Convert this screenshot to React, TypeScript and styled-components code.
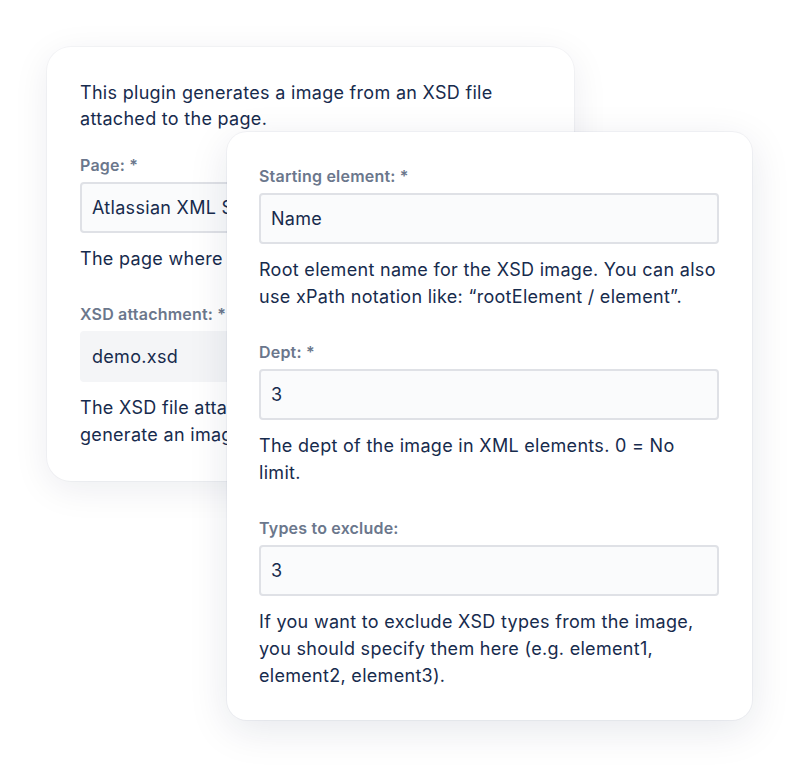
import type { ReactNode } from "react";
import styled, { createGlobalStyle } from "styled-components";

const GlobalStyle = createGlobalStyle`
  html, body {
    margin: 0;
    padding: 0;
    background: #ffffff;
  }
  body {
    font-family: Inter, "Noto Sans", "Liberation Sans", sans-serif;
    color: #172b4d;
    -webkit-font-smoothing: antialiased;
  }
`;

type FieldProps = {
  label: string;
  value: string;
  help: ReactNode;
  disabled?: boolean;
  first?: boolean;
};

const Field = ({ label, value, help, disabled, first }: FieldProps) => (
  <FieldGroup $first={first}>
    <Label>{label}</Label>
    <Input $disabled={disabled}>{value}</Input>
    <Help>{help}</Help>
  </FieldGroup>
);

export default function App() {
  return (
    <>
      <GlobalStyle />
      <Stage>
        <BackCard>
          <Intro>This plugin generates a image from an XSD file attached to the page.</Intro>
          <Spacer />
          <Field
            first
            label="Page: *"
            value="Atlassian XML Schema Documentation"
            help="The page where the XSD file is attached."
          />
          <Field
            label="XSD attachment: *"
            value="demo.xsd"
            disabled
            help={
              <>
                The XSD file attached to the page used to
                <br />
                generate an image.
              </>
            }
          />
        </BackCard>
        <FrontCard>
          <Field
            first
            label="Starting element: *"
            value="Name"
            help="Root element name for the XSD image. You can also use xPath notation like: “rootElement / element”."
          />
          <Field
            label="Dept: *"
            value="3"
            help="The dept of the image in XML elements. 0 = No limit."
          />
          <Field
            label="Types to exclude:"
            value="3"
            help="If you want to exclude XSD types from the image, you should specify them here (e.g. element1, element2, element3)."
          />
        </FrontCard>
      </Stage>
    </>
  );
}

const Stage = styled.div`
  position: relative;
  width: 800px;
  height: 768px;
  padding: 47px 0 0 47px;
  box-sizing: border-box;
  overflow: hidden;
`;

const Card = styled.div`
  background: #ffffff;
  box-sizing: border-box;
  display: flex;
  flex-direction: column;
`;

const BackCard = styled(Card)`
  width: 527px;
  height: 434px;
  border-radius: 24px;
  padding: 33px 33px 0 33px;
  overflow: hidden;
  box-shadow: 0 0 0 1px rgba(9, 30, 66, 0.03), 0 8px 36px rgba(9, 30, 66, 0.08);
`;

const FrontCard = styled(Card)`
  position: absolute;
  left: 227px;
  top: 132px;
  width: 525px;
  height: 588px;
  border-radius: 20px;
  padding: 34px 33px 0 32px;
  box-shadow: 0 0 0 1px rgba(9, 30, 66, 0.04), 0 10px 40px rgba(9, 30, 66, 0.1);
`;

const Intro = styled.p`
  margin: 0;
  font-size: 18px;
  line-height: 26px;
  letter-spacing: 0.3px;
  width: 440px;
`;

const Spacer = styled.div`
  height: 23px;
`;

const FieldGroup = styled.div<{ $first?: boolean }>`
  display: flex;
  flex-direction: column;
  margin-top: ${(p) => (p.$first ? "0" : "32px")};
`;

const Label = styled.div`
  font-size: 16px;
  line-height: 20px;
  font-weight: 600;
  letter-spacing: 0.2px;
  color: #6b778c;
  margin-bottom: 7px;
  white-space: nowrap;
`;

const Input = styled.div<{ $disabled?: boolean }>`
  height: 51px;
  box-sizing: border-box;
  border-radius: 4px;
  border: 2px solid ${(p) => (p.$disabled ? "#f4f5f7" : "#dfe1e6")};
  background: ${(p) => (p.$disabled ? "#f4f5f7" : "#fafbfc")};
  padding: 0 10px;
  display: flex;
  align-items: center;
  font-size: 18px;
  letter-spacing: 0.3px;
  color: #172b4d;
  white-space: nowrap;
  overflow: hidden;
  width: 460px;
`;

const Help = styled.p`
  margin: 12px 0 0 0;
  font-size: 18px;
  line-height: 27px;
  letter-spacing: 0.3px;
  width: 460px;
`;
